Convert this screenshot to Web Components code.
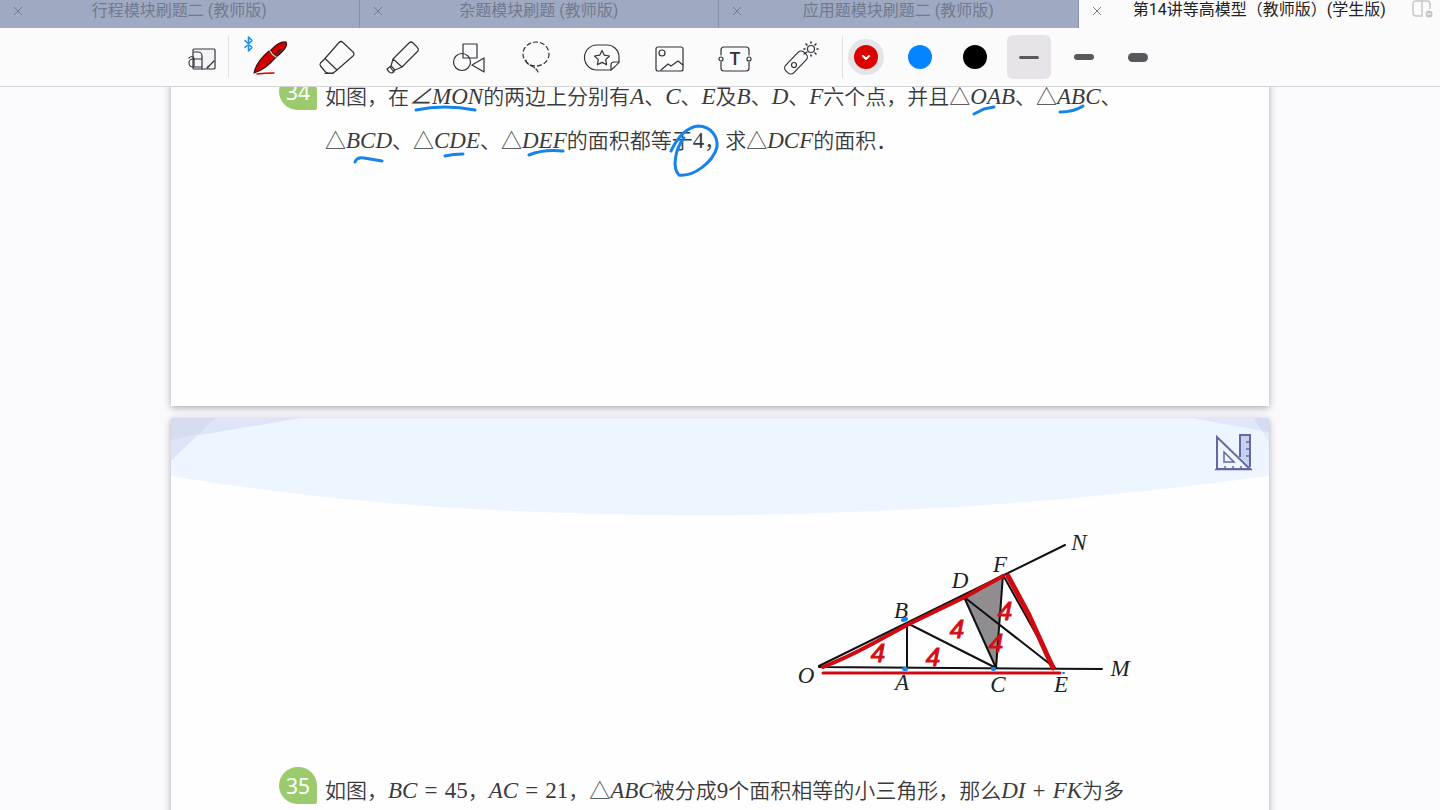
<!DOCTYPE html>
<html lang="zh-CN">
<head>
<meta charset="utf-8">
<title>第14讲等高模型</title>
<style>
  html, body { height: 100%; }
  body {
    margin: 0;
    overflow: hidden;
    background: #faf9fc;
    color: #3a3a3c;
    font-family: Roboto, "Noto Sans CJK SC", sans-serif;
  }
</style>
</head>
<body>
<note-app></note-app>

<script>
// Icons — 44x44 box, stroked with currentColor
const ICONS = {
  reader: `
    <rect x="13" y="14" width="22" height="20" rx="1" fill="#f4f4f7"/>
    <path d="M14 17h4a4 4 0 0 1 4 4v13M9 23q3-3 5 0v9M22 24h-9a4 4 0 0 0 0 8h9M27 33l7-7M28 33v-2"/>`,
  pen: `
    <path d="M-2 5.500l7 7-3.500 3.500V2l3.500 3.500-7 7" stroke="#1e90f0" stroke-width="1.600"/>
    <path d="M7 38Q9 27 22 16L29 22Q19 34 7 38Z" fill="#d40000" stroke="#3a1014"/>
    <path d="M23 16Q32 6 39 7Q42 12 29 22Z" fill="#d40000" stroke="#3a1014"/>
    <path d="M23 16q2 4 6 6" stroke="#ddd"/>
    <path d="M29 19l5-5" stroke="#6d1318" stroke-width="2"/>
    <path d="M10 39q8-1 17-1" stroke="#d40000" stroke-width="1.400"/>`,
  eraser: `
    <path d="M25 7.500q2-2 4 0l10 9.500q2 2 0 4L23 35 11 23.500zM11 23.500l-4.500 4.500q-1 1.500 0 3l5 6q1 1 3 1h4q1 0 2-1L23 35M11 38.500h8"/>`,
  highlighter: `
    <path d="M29 8q2-2 4 0l4 4q2 2 1 4L22 32l-9-8zM13 24l-2 7 4 4 7-3M11 31l-4 3M15 35l-3 3q-3 0-5-4M10 32l4 5"/>`,
  shapes: `
    <circle cx="15" cy="27" r="8.500"/>
    <rect x="16" y="9" width="14" height="14"/><path d="M25 30l12-7v14z"/>`,
  lasso: `
    <ellipse cx="22" cy="19" rx="13" ry="12" stroke-dasharray="4 3"/>
    <path d="M12 25c0 6 9 5 12 12" stroke-dasharray="5 2"/>`,
  sticker: `
    <path d="M31 35H17A12 12 0 0 1 17 10h10a12 12 0 0 1 12 12v5q-1 2-8 8z"/>
    <path d="M39 27h-5q-3 0-3 3v5"/>
    <path d="M22 15.500l2.300 4.700 5.200.8-3.800 3.600.9 5.200-4.600-2.400-4.600 2.400.9-5.200-3.800-3.600 5.200-.8z"/>`,
  image: `
    <rect x="9" y="12" width="27" height="24" rx="2"/>
    <circle cx="15" cy="18" r="3"/>
    <path d="M14 35l7-6 3 2 7-5 5 4"/>`,
  text: `
    <path d="M8 20v-5q0-3 3-3h22q3 0 3 3v5M8 27v6q0 3 3 3h22q3 0 3-3v-6"/>
    <circle cx="8" cy="24" r="2"/><circle cx="36" cy="24" r="2"/>
    <text x="22" y="30" text-anchor="middle" font-family="Roboto, sans-serif" font-size="18" font-weight="500" fill="currentColor" stroke="none">T</text>`,
  laser: `
    <rect x="3" y="22" width="26" height="11" rx="4" transform="rotate(-46 16 27.500)"/>
    <path d="M24 19l3-2"/>
    <circle cx="14" cy="30" r="2.500"/>
    <circle cx="31" cy="14" r="3.500"/>
    <path d="M31 7v1M31 20v1M24 14h1M37 14h1M26 9l1 1M35 18l1 1M36 9l-1 1" stroke-width="1.600"/>`
};

const TOOLS = [
  ['pen', '画笔'], ['eraser', '橡皮擦'], ['highlighter', '荧光笔'], ['shapes', '形状'], ['lasso', '套索'],
  ['sticker', '贴纸'], ['image', '图片'], ['text', '文本'], ['laser', '激光笔']
];

const icon = (name) => `<svg viewBox="0 0 44 44" aria-hidden="true">${ICONS[name]}</svg>`;

// Small helper so every element below clones its own template
function define(name, html) {
  const tpl = document.createElement('template');
  tpl.innerHTML = html;
  customElements.define(name, class extends HTMLElement {
    constructor() {
      super();
      this.attachShadow({ mode: 'open' });
      this.shadowRoot.appendChild(tpl.content.cloneNode(true));
    }
  });
}

// One document tab
define('doc-tab', `
  <style>
    :host {
      display: grid;
      grid-template-columns: 36px 1fr 36px;
      align-items: start;
      flex: 1;
      box-sizing: border-box;
      height: 28px;
      background: #9fa9c1;
      border-right: 1px solid #8791ab;
      color: #727a8f;
    }
    :host([active]) { flex-basis: 3px; background: #fbfbfc; border: 0; color: #222; }
    button {
      border: 0; padding: 0; background: none; color: inherit;
      font: inherit; font-size: 16px; line-height: 20px; height: 22px;
      white-space: nowrap; cursor: pointer;
    }
    :host([active]) .label { height: 20px; }
    .close { display: flex; align-items: center; justify-content: center; }
    .close svg { width: 10px; height: 10px; fill: none; stroke: #747b8d; }
    ::slotted(svg) { width: 24px; height: 20px; }
  </style>
  <button class="close" aria-label="关闭标签"><svg viewBox="0 0 10 10"><path d="M1 1l8 8M9 1l-8 8"/></svg></button>
  <button class="label"><slot></slot></button>
  <slot name="end"></slot>
`);

define('tab-strip', `
  <style>:host { display: flex; flex: none; }</style>
  <slot></slot>
`);

// Toolbar: drawing tools, ink colours, stroke widths
define('tool-bar', `
  <style>
    :host {
      display: flex;
      align-items: center;
      flex: none;
      box-sizing: border-box;
      height: 59px;
      padding-left: 12.5%;
      background: #fbfbfc;
      border-bottom: 1px solid #d5d4d9;
      color: #33323a;
    }
    button {
      display: flex; align-items: center; justify-content: center;
      width: 44px; height: 44px;
      border: 0; padding: 0; border-radius: 6px;
      background: none; color: inherit; cursor: pointer;
    }
    svg { width: 44px; height: 44px; fill: none; stroke: currentColor; stroke-width: 1.2; stroke-linecap: round; stroke-linejoin: round; overflow: visible; }
    .group { display: flex; justify-content: space-between; }
    .tools { width: 577px; margin-left: 18px; }
    .styles { width: 316px; }
    .sep { width: 1px; height: 42px; background: #e2e1e5; }
    .first { margin-left: 4px; }
    .last { margin-left: 18px; margin-right: 1px; }
    .dot {
      display: flex; align-items: center; justify-content: center;
      width: 24px; height: 24px; border-radius: 50%;
    }
    .red { background: #dc0000; box-shadow: 0 0 0 6px #e5e4e7; }
    .red svg { width: 8px; height: 8px; stroke: #fff; stroke-width: 2; }
    .blue { background: #0485ff; }
    .black { background: #000; }
    .on { background: #e6e4e9; }
    .line { width: 20px; height: 3px; border-radius: 2px; background: #59585c; }
    .mid { height: 6px; border-radius: 3px; }
    .thick { height: 9px; border-radius: 5px; }
  </style>
  <button aria-label="阅读模式">${icon('reader')}</button>
  <span class="sep first"></span>
  <div class="group tools">
    ${TOOLS.map(([name, label]) => `<button aria-label="${label}">${icon(name)}</button>`).join('')}
  </div>
  <span class="sep last"></span>
  <div class="group styles">
    <button aria-label="红色"><span class="dot red"><svg viewBox="0 0 8 8"><path d="M1 3l3 3 3-3"/></svg></span></button>
    <button aria-label="蓝色"><span class="dot blue"></span></button>
    <button aria-label="黑色"><span class="dot black"></span></button>
    <button class="on" aria-label="细"><span class="line"></span></button>
    <button aria-label="中"><span class="line mid"></span></button>
    <button aria-label="粗"><span class="line thick"></span></button>
  </div>
`);

// A sheet of paper in the viewer
define('paper-page', `
  <style>
    :host {
      display: block;
      background: #fffeff;
      box-shadow: 0 2px 7px rgba(40, 36, 48, 0.36);
    }
  </style>
  <slot></slot>
`);

// Numbered question; slot "ink" lies over the text
define('problem-item', `
  <style>
    :host { display: flex; position: relative; gap: 8px; padding-left: 108px; }
    .badge {
      flex: none;
      width: 38px; height: 37px;
      border-radius: 19px 19px 2px 19px;
      background: #9bcb6c; color: #fff;
      font: 21px/38px "Noto Sans", sans-serif;
      text-align: center;
    }
    .body { padding-top: 2px; font-size: 21px; line-height: 44px; font-weight: 350; white-space: nowrap; }
    ::slotted(svg) { position: absolute; left: 0; top: 0; width: 1098px; height: 120px; pointer-events: none; }
  </style>
  <div class="badge"><slot name="no"></slot></div>
  <div class="body"><slot></slot></div>
  <slot name="ink"></slot>
`);

// Inline maths. No whitespace in the template: it would show as a gap in the sentence
define('math-term', `<style>
    :host { display: inline; font-family: "Liberation Serif", serif; font-size: 23px; font-weight: 400; line-height: 1; font-style: italic; }
    :host([num]) { font-style: normal; }
    :host([op]) { font-style: normal; margin: 0 2px; }
  </style><slot></slot>`);

// Decorated top of a handout page
define('page-banner', `
  <style>
    :host { display: grid; height: 97px; }
    svg { grid-area: 1 / 1; display: block; }
    .bg { width: 100%; height: 97px; }
    .logo { justify-self: end; margin: 14px 15px 0 0; width: 40px; height: 40px; }
  </style>
  <svg class="bg" viewBox="0 0 1098 97" preserveAspectRatio="none">
    <path d="M0 0H1098V58Q812 97 520 97Q230 97 0 58Z" fill="#edf5ff"/>
    <path d="M0 0H130L0 22Z M0 0H44L0 43Z" fill="#dfe5f8"/>
    <path d="M0 0H44L28 16 0 22Z" fill="#d7ddf0"/>
    <path d="M1020 0H1098V14Z M1083 0H1098V24Z" fill="#dfe7f8"/>
    <path d="M1083 0H1098V14L1090 12Z" fill="#d3dcf1"/>
  </svg>
  <svg class="logo" viewBox="0 0 40 40" fill="none" stroke="#6468a0" stroke-width="2">
    <path d="M26 25V3H36V35" fill="#c6d0ef"/>
    <path d="M3 37V5L36 37Z" fill="#edf5ff"/>
    <path d="M10 20V30H20Z" stroke-width="1.500"/>
    <path d="M1 37.500H38M11 37v-3M19 37v-3M27 37v-3M36 10h-4M36 17h-4M36 24h-4" stroke-width="1.500"/>
  </svg>
`);

// Angle MON with the hand-marked areas
define('angle-figure', `
  <style>
    :host { display: flex; justify-content: flex-end; padding: 10px 129px 0 0; }
    svg { width: 350px; height: 180px; overflow: visible; }
    .label { font: italic 23px "Liberation Serif", serif; fill: #222; text-anchor: middle; }
    .mark { font: italic 26px "Liberation Sans", sans-serif; fill: #d40d12; stroke: #d40d12; text-anchor: middle; }
    .ink { fill: none; stroke: #cf0a10; stroke-linecap: round; stroke-linejoin: round; }
  </style>
  <svg viewBox="790 525 350 180" role="img" aria-label="∠MON">
    <path d="M964 597L1003 575 996 668Z" fill="#8f8d90"/>
    <g fill="none" stroke="#111" stroke-width="2" stroke-linecap="round">
      <path d="M819 666L1065 545M819 667L1102 669M907 623V668M907 623L996 668M964 597L996 668M964 597L1055 668M1003 575L996 668M1003 575L1055 668"/>
    </g>
    <g class="ink">
      <path d="M823 673H1060" stroke-width="3"/>
      <path d="M823 667Q846 658 872 644L907 625 965 597 1003 576" stroke-width="4"/>
      <path d="M1008 576L1029 615 1053 668" stroke-width="5"/>
    </g>
    <g stroke="#1687ee" stroke-width="4" stroke-linecap="round">
      <path d="M903 620l3-1M904 669h2M993 669h1"/><path d="M1063 673h1" stroke-width="2"/>
    </g>
    <g class="label">
      <text x="806" y="683">O</text><text x="902" y="690">A</text><text x="998" y="692">C</text>
      <text x="1061" y="692">E</text><text x="1120" y="676">M</text><text x="901" y="618">B</text>
      <text x="960" y="588">D</text><text x="1000" y="572">F</text><text x="1079" y="550">N</text>
    </g>
    <g class="mark">
      <text x="878" y="662">4</text><text x="933" y="666">4</text><text x="957" y="638">4</text>
      <text x="1005" y="620">4</text><text x="996" y="652">4</text>
    </g>
  </svg>
`);

// Whole app
define('note-app', `
  <style>
    :host { display: flex; flex-direction: column; height: 100vh; }
    main { flex: 1; min-height: 0; overflow: hidden; padding: 0 171px; }
    /* the first page is scrolled partly under the toolbar */
    .stack { display: flex; flex-direction: column; gap: 12px; margin-top: -14px; }
    .first { padding-bottom: 243px; }
    .next { padding-bottom: 60px; }
    .next problem-item { padding-top: 62px; }
    .row { display: block; }
    .ink { fill: none; stroke: #1683e8; stroke-width: 3; stroke-linecap: round; }
    .split { justify-self: center; fill: none; stroke: #c4c3c9; stroke-width: 1.4; }
  </style>
  <tab-strip>
    <doc-tab>行程模块刷题二 (教师版)</doc-tab>
    <doc-tab>杂题模块刷题 (教师版)</doc-tab>
    <doc-tab>应用题模块刷题二 (教师版)</doc-tab>
    <doc-tab active>第14讲等高模型（教师版）(学生版)
      <svg slot="end" class="split" viewBox="0 0 24 20"><path d="M12 1v15H6q-3 0-3-3V3q0-2 3-2h11q3 0 3 3v5"/><circle cx="19" cy="14" r="3.500" fill="#c4c3c9" stroke="none"/><path d="M17 14h4" stroke="#fff" stroke-width="1"/></svg>
    </doc-tab>
  </tab-strip>
  <tool-bar></tool-bar>
  <main>
    <div class="stack">
      <paper-page class="first">
        <problem-item>
          <span slot="no">34</span>
          <span class="row">如图，在<math-term>∠MON</math-term>的两边上分别有<math-term>A</math-term>、<math-term>C</math-term>、<math-term>E</math-term>及<math-term>B</math-term>、<math-term>D</math-term>、<math-term>F</math-term>六个点，并且△<math-term>OAB</math-term>、△<math-term>ABC</math-term>、</span>
          <span class="row">△<math-term>BCD</math-term>、△<math-term>CDE</math-term>、△<math-term>DEF</math-term>的面积都等于<math-term num>4</math-term>，求△<math-term>DCF</math-term>的面积．</span>
          <svg slot="ink" class="ink" viewBox="171 73 1098 120">
            <path d="M416 110q28-6 59 0M974 114l10-5 10-2M1060 112q14 0 23-6M355 162q2-5 9-4l18 3M445 156q8-2 18-2M529 155q14-6 34-4"/>
            <path d="M671 151Q682 128 698 126C712 126 718 138 717 147C713 162 694 177 679 175C672 168 675 149 684 138"/>
          </svg>
        </problem-item>
      </paper-page>
      <paper-page class="next">
        <page-banner></page-banner>
        <angle-figure></angle-figure>
        <problem-item>
          <span slot="no">35</span>
          <span class="row">如图，<math-term>BC</math-term> <math-term op>=</math-term> <math-term num>45</math-term>，<math-term>AC</math-term> <math-term op>=</math-term> <math-term num>21</math-term>，△<math-term>ABC</math-term>被分成<math-term num>9</math-term>个面积相等的小三角形，那么<math-term>DI</math-term> <math-term op>+</math-term> <math-term>FK</math-term>为多</span>
        </problem-item>
      </paper-page>
    </div>
  </main>
`);
</script>
</body>
</html>
